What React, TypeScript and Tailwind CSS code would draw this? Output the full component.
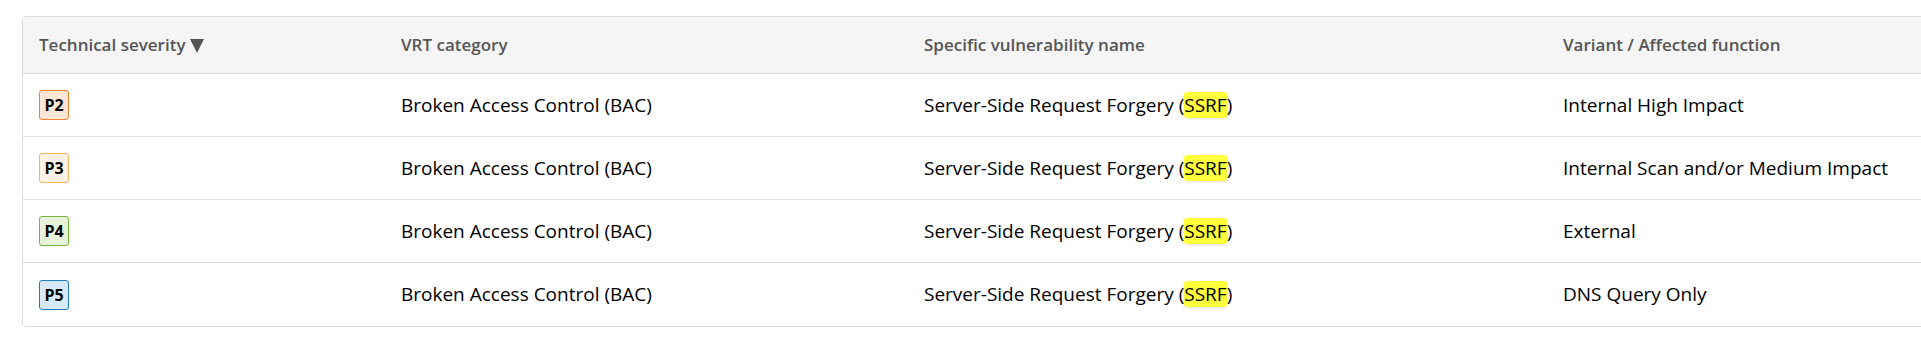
import React from "react";

type Row = {
  priority: string
  badge: string
  category: string
  variant: string
}

const rows: Row[] = [
  { priority: "P2", badge: "bg-[#fde6d5] border-[#f5812d]", category: "Broken Access Control (BAC)", variant: "Internal High Impact" },
  { priority: "P3", badge: "bg-[#fef2e4] border-[#f6b160]", category: "Broken Access Control (BAC)", variant: "Internal Scan and/or Medium Impact" },
  { priority: "P4", badge: "bg-[#e6f2da] border-[#72b53a]", category: "Broken Access Control (BAC)", variant: "External" },
  { priority: "P5", badge: "bg-[#d7e8f7] border-[#1f7ec1]", category: "Broken Access Control (BAC)", variant: "DNS Query Only" },
]

export default function App() {
  return (
    <div className="w-full h-[340px] overflow-hidden bg-white pt-4 pl-[22px] font-['Open_Sans',sans-serif]">
      <div className="w-[2000px] border border-[#dcdcdc] rounded-l-[4px] overflow-hidden">
        {/* header */}
        <div className="flex items-center h-[57px] bg-[#f5f5f5] border-b border-[#dcdcdc] text-[17px] font-semibold text-[#555]">
          <div className="w-[362px] pl-4 flex items-center gap-[5px]">
            Technical severity
            <svg width="14" height="14" viewBox="0 0 14 14" className="mt-[1px]">
              <path d="M0 0h14L7 14z" fill="#555" />
            </svg>
          </div>
          <div className="w-[523px] pl-4">VRT category</div>
          <div className="w-[639px] pl-4">Specific vulnerability name</div>
          <div className="flex-1 pl-4">Variant / Affected function</div>
        </div>
        {rows.map((r, i) => (
          <div
            key={r.priority}
            className={`flex items-center h-[63px] text-[19px] text-black ${i < rows.length - 1 ? "border-b border-[#dcdcdc]" : ""}`}
          >
            <div className="w-[362px] pl-4">
              <span className={`inline-flex items-center justify-center w-[30px] h-[30px] rounded-[3px] border text-[16px] font-bold ${r.badge}`}>
                {r.priority}
              </span>
            </div>
            <div className="w-[523px] pl-4">{r.category}</div>
            <div className="w-[639px] pl-4">
              Server-Side Request Forgery (
              <span className="bg-[#ffff3c] rounded-[3px] shadow-[0_1px_3px_rgba(0,0,0,0.12)]">SSRF</span>
              )
            </div>
            <div className="flex-1 pl-4">{r.variant}</div>
          </div>
        ))}
      </div>
    </div>
  )
}
